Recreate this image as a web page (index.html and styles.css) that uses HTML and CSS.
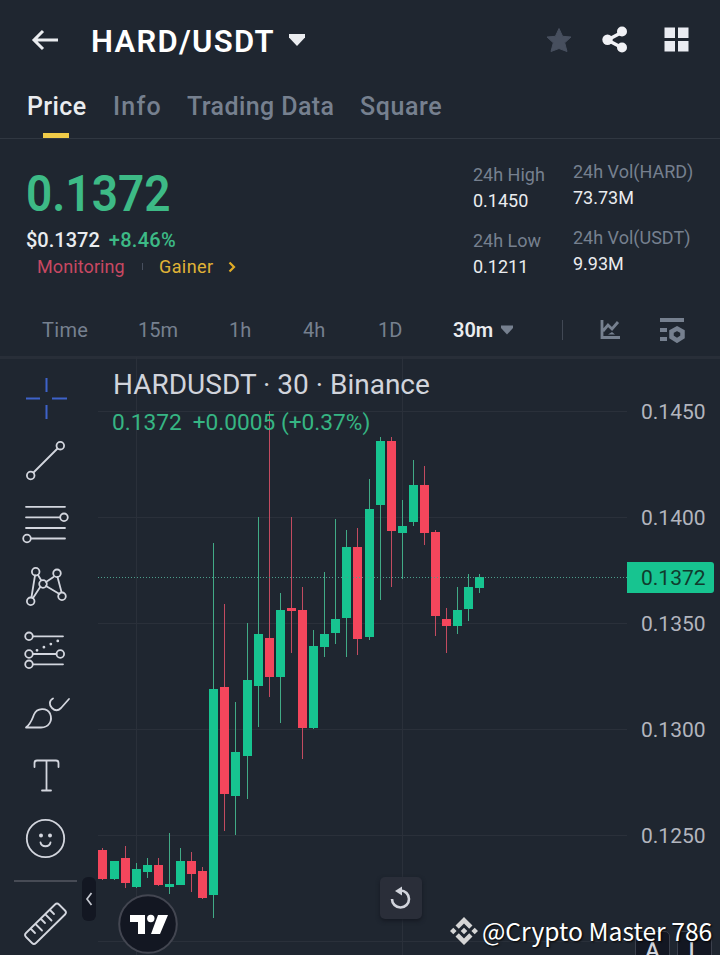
FILE: index.html
```html
<!DOCTYPE html>
<html lang="en">
<head>
    <meta charset="UTF-8">
    <meta name="viewport" content="width=device-width, initial-scale=1.0">
    <title>HARD/USDT</title>
    <link rel="stylesheet" href="styles.css">
</head>
<body>
    <header class="header">
        <svg class="back" width="28" height="22" viewBox="0 0 28 22"><path d="M12 2L3 11l9 9M3 11h24" /></svg>
        <h1 class="pair">HARD/USDT</h1>
        <svg class="caret" width="18" height="14" viewBox="0 0 18 14"><path d="M1 1h16v3.500L9 13 1 4.500z" /></svg>
        <div class="actions">
            <svg width="28" height="28" viewBox="0 0 28 28"><path class="star" d="M14 2.500l3.600 7.800 8.400.700-6.300 5.800 2.300 8.700L14 22.500 6 25.500l2.300-8.700L2 11l8.400-.7z" /></svg>
            <svg width="28" height="28" viewBox="0 0 28 28"><path d="M21.500 6L6.500 14l15 8" fill="none" stroke="#f0f1f5" stroke-width="3.500" /><g fill="#f0f1f5"><circle cx="21" cy="5.500" r="5" /><circle cx="6.500" cy="13.700" r="5.200" /><circle cx="21" cy="21.500" r="5" /></g></svg>
            <svg width="26" height="26" viewBox="0 0 26 26"><path d="M.5 .5h10.500v10.500H.5zM14 .5H24.500v10.500H14zM.5 14h10.500v10.500H.5zM14 14h10.500v10.500H14z" fill="#eaecf2" /></svg>
        </div>
    </header>

    <nav class="tabs">
        <a class="tab active t1">Price</a>
        <a class="tab t2">Info</a>
        <a class="tab t3">Trading Data</a>
        <a class="tab t4">Square</a>
    </nav>

    <section class="summary">
        <div class="quote">
            <div class="last">0.1372</div>
            <div class="fiat"><span class="usd">$0.1372</span><span class="change">+8.46%</span></div>
            <div class="tags">
                <span class="monitoring">Monitoring</span>
                <span class="bar"></span>
                <span class="gainer">Gainer</span>
                <svg width="8" height="12" viewBox="0 0 8 12"><path d="M1.500 1.500L6 6l-4.500 4.500" fill="none" stroke="#e0ac26" stroke-width="2.200" /></svg>
            </div>
        </div>
        <dl class="stats range">
            <dt class="high">24h High</dt>
            <dd>0.1450</dd>
            <dt class="low">24h Low</dt>
            <dd>0.1211</dd>
        </dl>
        <dl class="stats volume">
            <dt>24h Vol(HARD)</dt>
            <dd>73.73M</dd>
            <dt>24h Vol(USDT)</dt>
            <dd>9.93M</dd>
        </dl>
    </section>

    <div class="intervals">
        <span class="i-time">Time</span>
        <span class="i-15">15m</span>
        <span class="i-1h">1h</span>
        <span class="i-4h">4h</span>
        <span class="i-1d">1D</span>
        <span class="i-30 selected">30m</span>
        <svg class="i-caret" width="12" height="10" viewBox="0 0 12 10"><path d="M0 .5h12v2.500L6 9.500 0 3z" fill="#76808f" /></svg>
        <span class="divider"></span>
        <svg class="i-chart" width="20" height="22" viewBox="0 0 20 22"><path d="M2 1v17.500h18M3 12l5-6 4 4 6-7" fill="none" stroke="#76808f" stroke-width="2.800" /><path d="M12 10v3l3 2.500H8L12 13" fill="#76808f" /></svg>
        <svg class="i-set" width="26" height="26" viewBox="0 0 26 26"><path d="M1 1h24v4H1zM1 11h7v4H1zM1 20h7v4H1z" fill="#76808f" /><path d="M18 11.500l5.500 3v5.500L18 23.500 12.500 20v-5.500z" fill="none" stroke="#76808f" stroke-width="4.500" /></svg>
    </div>

    <main class="chart">
        <aside class="tools">
            <svg width="98" height="598" viewBox="0 357 98 598">
                <path class="cross" d="M46.500 378v14M46.500 405v14M26 398.500h14M52 398.500h15" />
                <g class="lines">
                    <!-- trend line -->
                    <path d="M33.500 472.500L57.500 448.500" /><circle cx="30.700" cy="475.500" r="3.800" /><circle cx="60.300" cy="445.700" r="3.800" />
                    <!-- fib levels -->
                    <path d="M26 506.800h39M26 517.300h34M26 528h39M31 538.500h34" /><circle cx="64" cy="517.300" r="3.800" /><circle cx="27" cy="538.500" r="3.800" />
                    <!-- pattern -->
                    <path d="M35 575.500L31.500 597M38 575l3 5M33 598l7.500-11.500M46 582l7.500-5M57.500 577l4 15M46 586l13.500 8" />
                    <circle cx="35.700" cy="571.700" r="3.800" /><circle cx="57" cy="573.300" r="3.800" /><circle cx="43" cy="584" r="3.800" /><circle cx="30.700" cy="601.300" r="3.800" /><circle cx="62" cy="596.300" r="3.800" />
                    <!-- forecast -->
                    <path d="M33 636.300h30M33 654h23.500M33 664.300h30" /><path class="dots" d="M37 650.300L62 639" />
                    <circle cx="29" cy="636.300" r="3.800" /><circle cx="29" cy="654" r="3.800" /><circle cx="60.300" cy="654" r="3.800" /><circle cx="29" cy="664.300" r="3.800" />
                    <!-- brush -->
                    <path d="M26 727.500c5-4 6-8 8-13 3-7 13-7 16-1 3 7-1 14-9 14zM53 698.500c-4 2-4 7-1 9.500 3 3 6 3 9 0l8-9" />
                    <!-- text -->
                    <path d="M34.500 767v-4q0-2.500 2.500-2.500h19q2.500 0 2.500 2.500v4M46.500 761v29.500M42 790.500h9" />
                    <!-- emoji -->
                    <circle cx="45.500" cy="838.500" r="18.700" /><path d="M40.500 842.500c1 5 9 5 10 0" />
                    <!-- ruler -->
                    <path d="M26 937q-2-2 0-4l29-28.500q2-2 4 0l6 6q2 2 0 4L36 943q-2 2-4 0zM31 929l4 4M36 924.500l6 6M41 919l4 4M45.500 914.500l6 6M50 910l4 4" />
                </g>
                <circle cx="41" cy="835.500" r="2" fill="#d3d6de" /><circle cx="50" cy="835.500" r="2" fill="#d3d6de" />
                <path d="M14 881h63" stroke="#474b55" stroke-width="2" />
            </svg>
        </aside>
        <div class="plot">
            <svg id="candles" width="529" height="598" viewBox="98 357 529 598">
                <path class="grid" d="M98 411.500h529M98 517.500h529M98 623.500h529M98 729.500h529M98 835.500h529M98 941.500h529M136.500 357v598M402.500 357v598" />
            </svg>
            <div class="legend">
                <div class="symbol">HARDUSDT · 30 · Binance</div>
                <div class="values"><span>0.1372</span><span class="delta">+0.0005 (+0.37%)</span></div>
            </div>
            <svg class="tv" width="60" height="60" viewBox="0 0 60 60"><circle cx="30" cy="30" r="28.800" fill="#131722" stroke="#434651" stroke-width="2" /><path d="M12 21h15v19h-7V28h-8zM40 21h10l-8 19h-9z" fill="#fff" /><circle cx="32.800" cy="24.500" r="3.700" fill="#fff" /></svg>
            <div class="reset"><svg width="22" height="24" viewBox="0 0 22 24"><path d="M2 13a8.500 8.500 0 1 0 8.500-8.500" fill="none" stroke="#d1d4dc" stroke-width="2.600" /><path d="M5 5L12 .5v9z" fill="#d1d4dc" /></svg></div>
        </div>
        <div class="axis">
            <span>0.1450</span>
            <span>0.1400</span>
            <span>0.1350</span>
            <span>0.1300</span>
            <span>0.1250</span>
            <div class="price-tag">0.1372</div>
            <div class="modes"><b>A</b><b>L</b></div>
        </div>
        <div class="collapse"><svg width="8" height="14" viewBox="0 0 8 14"><path d="M6.500 1L2 7l4.500 6" fill="none" stroke="#c5c8d0" stroke-width="1.700" /></svg></div>
        <div class="watermark">
            <svg width="28" height="28" viewBox="0 0 28 28"><path d="M14 0l8.500 8.500-3.300 3.300L14 6.600l-5.200 5.200-3.300-3.300zM14 28l8.500-8.500-3.300-3.300L14 21.400l-5.200-5.200-3.300 3.300zM14 10.700l3.300 3.300-3.300 3.300-3.300-3.300zM3.300 10.700L6.600 14l-3.300 3.300L0 14zM24.700 10.700L28 14l-3.300 3.300-3.300-3.300z" fill="#d5d5d5" /></svg>
            <span>@Crypto Master 786</span>
        </div>
    </main>
    <script src="chart.js"></script>
</body>
</html>
```
FILE: styles.css
```css
* {
    box-sizing: border-box;
}

body {
    margin: 0;
    width: 720px;
    height: 955px;
    overflow: hidden;
    background: #1f2630;
    color: #eaecef;
    font-family: Roboto, "Liberation Sans", sans-serif;
}

svg {
    display: block;
    flex: none;
}

/* header */
.header {
    display: flex;
    align-items: center;
    height: 80px;
    padding: 0 30px;
}

.back {
    margin-left: 1px;
    fill: none;
    stroke: #eaecef;
    stroke-width: 3;
}

.pair {
    width: 183px;
    margin: 3px 0 0 32px;
    font-size: 31px;
    font-weight: 600;
    letter-spacing: 1.3px;
    white-space: nowrap;
    color: #fff;
}

.caret {
    margin-left: 14px;
    fill: #eaecef;
}

.actions {
    display: flex;
    align-items: center;
    gap: 28px;
    margin-left: auto;
}

.actions svg:last-child {
    margin-left: 7px;
}

.star {
    fill: #474f5e;
    stroke: #474f5e;
    stroke-linejoin: round;
}

/* tabs */
.tabs {
    display: flex;
    height: 59px;
    padding: 12px 0 0 27px;
    gap: 27px;
    border-bottom: 1px solid #303741;
    font-size: 25px;
    font-weight: 500;
    line-height: 29px;
    white-space: nowrap;
    color: #76808f;
}

.t1 { width: 59px; letter-spacing: .4px; }
.t2 { width: 47px; letter-spacing: 1.2px; }
.t3 { width: 146px; letter-spacing: .4px; }
.t4 { width: 82px; letter-spacing: .6px; }

.active {
    display: flex;
    flex-direction: column;
    justify-content: space-between;
    color: #eaecef;
}

.active::after {
    content: "";
    width: 26px;
    height: 5px;
    margin-left: 16px;
    background: #f0cb48;
}

/* price summary */
.summary {
    display: flex;
    height: 163px;
    padding-left: 26px;
}

.quote {
    width: 447px;
    padding-top: 26px;
}

.last {
    height: 59px;
    font-size: 50px;
    font-weight: 600;
    line-height: 58px;
    color: #3dba86;
    transform: scaleX(.92);
    transform-origin: left;
}

.fiat {
    display: flex;
    gap: 9px;
    padding-top: 3px;
    font-size: 20px;
    font-weight: 500;
    line-height: 26px;
}

.change {
    color: #3dba86;
    letter-spacing: .3px;
}

.tags {
    display: flex;
    align-items: center;
    padding-left: 11px;
    font-size: 18px;
    line-height: 27px;
}

.monitoring {
    width: 89px;
    letter-spacing: .1px;
    color: #c84862;
}

.bar {
    width: 1px;
    height: 7px;
    margin: 0 16px;
    background: #474f5e;
}

.gainer {
    width: 69px;
    letter-spacing: .4px;
    color: #e0b336;
}

.stats {
    margin: 0;
    padding-top: 20px;
    font-size: 18px;
    line-height: 26px;
    white-space: nowrap;
}

.range {
    width: 100px;
    padding-top: 23px;
}

dt {
    color: #76808f;
}

dd {
    margin: 0 0 14px;
    color: #eaecef;
}

/* intervals */
.intervals {
    display: flex;
    align-items: center;
    height: 57px;
    margin-bottom: -2px;
    padding: 2px 0 0 42px;
    border-bottom: 3px solid #282e38;
    font-size: 20px;
    color: #76808f;
}

.i-time { width: 96px; letter-spacing: .3px; }
.i-15 { width: 91px; }
.i-1h { width: 74px; }
.i-4h { width: 75px; }
.i-1d { width: 75px; }
.i-30 { width: 48px; }

.selected {
    font-weight: 600;
    color: #eaecef;
}

.divider {
    width: 1px;
    height: 20px;
    margin: 0 37px 0 49px;
    background: #414854;
}

.i-set {
    margin-left: 39px;
}

/* chart */
.chart {
    position: relative;
    display: flex;
    height: 598px;
}

.cross {
    stroke: #3e62c9;
    stroke-width: 2;
}

.lines {
    fill: none;
    stroke: #d3d6de;
    stroke-width: 1.8;
    stroke-linejoin: round;
    stroke-linecap: round;
}

.dots {
    stroke-width: 2.8;
    stroke-dasharray: 0 7.6;
}

.plot {
    position: relative;
    width: 529px;
}

.grid {
    stroke: #2a303a;
}

.up { fill: #17c490; }
.down { fill: #f4465c; }
.wick.up { fill: #41aa86; }
.wick.down { fill: #c24b60; }

.last-price {
    stroke: #4c9e8b;
    stroke-dasharray: 1 2;
}

.legend {
    position: absolute;
    left: 14px;
    top: 11px;
    white-space: nowrap;
}

.symbol {
    height: 38px;
    margin-left: 1px;
    font-size: 28px;
    line-height: 34px;
    color: #d1d4dc;
}

.values {
    font-size: 22.7px;
    line-height: 33px;
    color: #36b583;
}

.delta {
    margin-left: 11px;
}

.tv {
    position: absolute;
    left: 20px;
    top: 537px;
}

.reset {
    position: absolute;
    left: 282px;
    top: 520px;
    display: flex;
    align-items: center;
    justify-content: center;
    width: 42px;
    height: 42px;
    border-radius: 5px;
    background: #2a2e39;
    box-shadow: 0 2px 4px #151922;
}

.axis {
    position: relative;
    width: 93px;
    padding: 41px 0 0 14px;
    font-size: 21px;
    line-height: 28px;
    color: #b2b5be;
}

.axis span {
    display: block;
    height: 106px;
}

.price-tag {
    position: absolute;
    left: 0;
    top: 205px;
    width: 87px;
    height: 31px;
    padding-left: 14px;
    border-radius: 0 3px 3px 0;
    background: #17c490;
    line-height: 32px;
    color: #103b2d;
}

.modes {
    position: absolute;
    left: 8px;
    top: 574px;
    display: flex;
    gap: 7px;
}

.modes b {
    width: 35px;
    height: 30px;
    border: 1px solid #3b404c;
    border-radius: 5px;
    background: #131722;
    font-weight: 500;
    line-height: 36px;
    text-align: center;
    color: #d1d4dc;
}

.collapse {
    position: absolute;
    left: 82px;
    top: 520px;
    display: flex;
    align-items: center;
    justify-content: center;
    width: 14px;
    height: 44px;
    border-radius: 6px;
    background: #131722;
}

.watermark {
    position: absolute;
    left: 450px;
    top: 555px;
    display: flex;
    align-items: center;
    gap: 4px;
    font-family: "Noto Sans CJK SC", "Noto Sans", sans-serif;
    font-size: 24.7px;
    line-height: 36px;
    white-space: nowrap;
    color: #fff;
    text-shadow: 1px 1px 2px #000;
}

.watermark svg {
    margin-top: 2px;
}
```
FILE: chart.js
```js
// x, wick top, body top, body bottom, wick bottom, direction (1 = up)
var candles = [
    [98, 848, 850, 879, 880, 0],
    [110, 861, 861, 879, 880, 1],
    [121, 846, 858, 883, 888, 0],
    [132, 863, 869, 887, 888, 1],
    [143, 858, 865, 872, 878, 1],
    [154, 858, 865, 885, 886, 0],
    [165, 833, 884, 887, 894, 1],
    [176, 848, 861, 885, 885, 1],
    [187, 852, 861, 874, 892, 0],
    [198, 867, 871, 898, 899, 0],
    [209, 543, 689, 895, 918, 1],
    [220, 604, 687, 794, 831, 0],
    [231, 702, 752, 796, 835, 1],
    [243, 623, 680, 756, 799, 1],
    [254, 517, 634, 686, 727, 1],
    [265, 411, 638, 677, 697, 0],
    [276, 593, 610, 677, 723, 1],
    [287, 517, 608, 611, 653, 0],
    [298, 587, 610, 728, 759, 0],
    [309, 630, 646, 728, 729, 1],
    [320, 572, 634, 647, 657, 1],
    [331, 519, 619, 633, 644, 1],
    [342, 530, 547, 618, 657, 1],
    [353, 528, 547, 639, 655, 0],
    [365, 479, 509, 637, 640, 1],
    [376, 437, 441, 505, 600, 1],
    [387, 437, 441, 531, 587, 0],
    [398, 500, 526, 533, 579, 1],
    [409, 460, 485, 522, 526, 1],
    [420, 466, 485, 533, 545, 0],
    [431, 530, 532, 616, 636, 0],
    [442, 608, 619, 626, 653, 0],
    [453, 587, 610, 626, 634, 1],
    [464, 574, 587, 609, 621, 1],
    [475, 574, 577, 588, 593, 1]
];

var svg = document.querySelector("#candles");

function add(tag, cls, attrs) {
    var el = document.createElementNS("http://www.w3.org/2000/svg", tag);
    el.setAttribute("class", cls);
    for (var key in attrs) {
        el.setAttribute(key, attrs[key]);
    }
    svg.appendChild(el);
}

candles.forEach(function (c) {
    var dir = c[5] ? "up" : "down";
    add("rect", "wick " + dir, { x: c[0] + 4, y: c[1], width: 1, height: c[4] - c[1] });
    add("rect", dir, { x: c[0], y: c[2], width: 9, height: c[3] - c[2] });
});

add("path", "last-price", { d: "M98 577.5h529" });
```
